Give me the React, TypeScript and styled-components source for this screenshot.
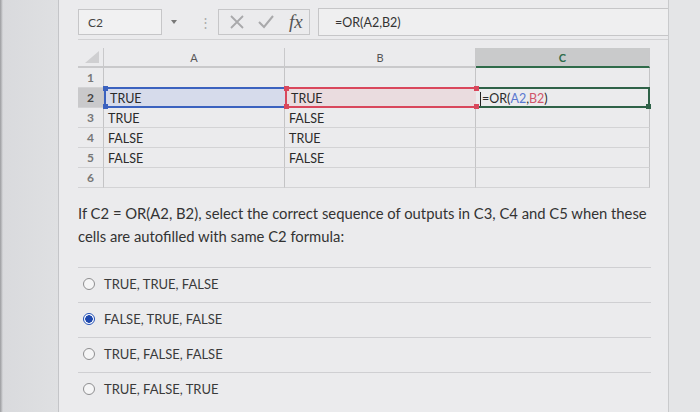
import React from 'react'
import styled, { createGlobalStyle } from 'styled-components'

const GlobalStyle = createGlobalStyle`
  html, body { margin: 0; padding: 0; }
  body {
    width: 700px;
    height: 412px;
    overflow: hidden;
    background: #e6e7e9;
    font-family: Lato, "Open Sans", sans-serif;
  }
`

const rows = [
  { n: '1', a: '', b: '' },
  { n: '2', a: 'TRUE', b: 'TRUE' },
  { n: '3', a: 'TRUE', b: 'FALSE' },
  { n: '4', a: 'FALSE', b: 'TRUE' },
  { n: '5', a: 'FALSE', b: 'FALSE' },
  { n: '6', a: '', b: '' },
]

const options = ['TRUE, TRUE, FALSE', 'FALSE, TRUE, FALSE', 'TRUE, FALSE, FALSE', 'TRUE, FALSE, TRUE']

export default function App(): React.ReactElement {
  return (
    <>
      <GlobalStyle />
      <Page>
        <LeftStrip />
        <Panel>
          <FormulaBar>
            <NameBox>
              <span>C2</span>
              <Caret />
            </NameBox>
            <Grip>⋮</Grip>
            <IconBox>
              <svg width="20" height="20" viewBox="0 0 20 20">
                <path d="M4 4 L16 16 M16 4 L4 16" stroke="#a9a9ab" strokeWidth="1.8" fill="none" />
              </svg>
              <svg width="20" height="20" viewBox="0 0 20 20">
                <path d="M3 10 L8 15 L17 4" stroke="#a9a9ab" strokeWidth="2" fill="none" />
              </svg>
              <Fx>fx</Fx>
            </IconBox>
            <FormulaInput>=OR(A2,B2)</FormulaInput>
          </FormulaBar>

          <Sheet>
            <Corner>
              <svg width="14" height="12" viewBox="0 0 14 12">
                <path d="M14 0 L14 12 L0 12 Z" fill="#cfcfd1" />
              </svg>
            </Corner>
            <ColHead>A</ColHead>
            <ColHead>B</ColHead>
            <ColHead $active>C</ColHead>
            {rows.map((r) => (
              <React.Fragment key={r.n}>
                <RowHead $active={r.n === '2'}>{r.n}</RowHead>
                {r.n === '2' ? (
                  <>
                    <Cell $tone="blue">
                      {r.a}
                      <Handle $c="#3b62bf" $x="left" $y="top" />
                      <Handle $c="#3b62bf" $x="left" $y="bottom" />
                    </Cell>
                    <Cell $tone="red">
                      {r.b}
                      <Handle $c="#d9475c" $x="left" $y="top" />
                      <Handle $c="#d9475c" $x="left" $y="bottom" />
                      <Handle $c="#d9475c" $x="right" $y="top" />
                      <Handle $c="#d9475c" $x="right" $y="bottom" />
                    </Cell>
                    <Cell $tone="green">
                      <Cursor />=OR(<Ref $c="#5a78d0">A2</Ref>,<Ref $c="#d0546a">B2</Ref>)
                      <Handle $c="#2f6248" $x="right" $y="bottom" />
                    </Cell>
                  </>
                ) : (
                  <>
                    <Cell>{r.a}</Cell>
                    <Cell>{r.b}</Cell>
                    <Cell />
                  </>
                )}
              </React.Fragment>
            ))}
          </Sheet>

          <Question>
            If C2 = OR(A2, B2), select the correct sequence of outputs in C3, C4 and C5 when these
            cells are autofilled with same C2 formula:
          </Question>

          <Options>
            {options.map((o, i) => (
              <Option key={o}>
                <Radio $checked={i === 1} />
                {o}
              </Option>
            ))}
          </Options>
        </Panel>
        <RightStrip />
      </Page>
    </>
  )
}

const Page = styled.div`
  display: flex;
  width: 700px;
  height: 412px;
`

const LeftStrip = styled.div`
  width: 58px;
  background: linear-gradient(90deg, #9a9b9e 0, #d9dadd 3px, #dfe0e2 100%);
  border-right: 1px solid #c4c5c8;
`

const RightStrip = styled.div`
  width: 31px;
  background: #e4e5e7;
  border-left: 1px solid #c9cacc;
`

const Panel = styled.div`
  flex: 1;
  background: #ebebed;
  padding: 8px 0 0 19px;
  display: flex;
  flex-direction: column;
`

const FormulaBar = styled.div`
  display: flex;
  align-items: center;
  height: 28px;
  border-bottom: 1px solid #d2d2d4;
  padding-bottom: 3px;
`

const NameBox = styled.div`
  width: 84px;
  height: 26px;
  box-sizing: border-box;
  border: 1px solid #c6c6c8;
  background: #f1f1f2;
  display: flex;
  align-items: center;
  padding-left: 9px;
  font-size: 12px;
  color: #444;
  position: relative;
`

const Caret = styled.span`
  position: absolute;
  left: 92px;
  top: 10px;
  width: 0;
  height: 0;
  border-left: 3px solid transparent;
  border-right: 3px solid transparent;
  border-top: 4px solid #777;
`

const Grip = styled.span`
  margin-left: 37px;
  width: 19px;
  color: #aaa;
  font-size: 13px;
`

const IconBox = styled.div`
  width: 92px;
  height: 26px;
  box-sizing: border-box;
  border: 1px solid #c6c6c8;
  display: flex;
  align-items: center;
  gap: 9px;
  padding-left: 8px;
`

const Fx = styled.span`
  font-family: 'Liberation Serif', serif;
  font-style: italic;
  font-size: 19px;
  color: #555;
  margin-left: 4px;
`

const FormulaInput = styled.div`
  flex: 1;
  height: 28px;
  margin-left: 8px;
  box-sizing: border-box;
  border: 1px solid #c6c6c8;
  border-right: none;
  display: flex;
  align-items: center;
  padding-left: 16px;
  font-size: 12.5px;
  color: #333;
  background: #efeff0;
`

const Sheet = styled.div`
  display: grid;
  grid-template-columns: 26px 181px 191px 174px;
  grid-auto-rows: 20px;
  margin-top: 8px;
  font-family: Lato, 'Open Sans', sans-serif;
  font-size: 12.5px;
  color: #2a2a2a;
`

const Corner = styled.div`
  display: flex;
  align-items: flex-start;
  justify-content: flex-end;
  padding: 3px 4px 0 0;
  border-bottom: 2px solid #c9c9cb;
  border-right: 1px solid #c9c9cb;
`

const ColHead = styled.div<{ $active?: boolean }>`
  display: flex;
  align-items: center;
  justify-content: center;
  font-size: 11px;
  color: ${({ $active }) => ($active ? '#2f6b4a' : '#555')};
  font-weight: ${({ $active }) => ($active ? 700 : 400)};
  background: ${({ $active }) => ($active ? '#c9cacb' : 'transparent')};
  border-bottom: 2px solid ${({ $active }) => ($active ? '#2f6b4a' : '#c9c9cb')};
  border-right: 1px solid #c9c9cb;
`

const RowHead = styled.div<{ $active?: boolean }>`
  display: flex;
  align-items: center;
  justify-content: center;
  font-size: 12px;
  font-weight: 700;
  color: ${({ $active }) => ($active ? '#444' : '#777')};
  background: ${({ $active }) => ($active ? '#c9c9cb' : 'transparent')};
  border-bottom: 1px solid #d3d3d5;
  border-right: 1px solid #c4c4c6;
`

const tones = {
  blue: { line: '#3b62bf', fill: 'rgba(120, 150, 225, 0.18)' },
  red: { line: '#d9475c', fill: 'rgba(230, 140, 150, 0.16)' },
  green: { line: '#2f6248', fill: 'transparent' },
}

const Cell = styled.div<{ $tone?: keyof typeof tones }>`
  position: relative;
  display: flex;
  align-items: center;
  padding: 2px 0 0 4px;
  box-sizing: border-box;
  border-bottom: 1px solid #d3d3d5;
  border-right: 1px solid #c4c4c6;
  ${({ $tone }) =>
    $tone &&
    `
    background: ${tones[$tone].fill};
    border-top: 2px solid ${tones[$tone].line};
    border-bottom: 2px solid ${tones[$tone].line};
    margin-top: -1px;
  `}
  ${({ $tone }) => $tone === 'green' && `border-right: 2px solid ${tones.green.line};`}
  ${({ $tone }) => $tone === 'red' && `border-left: 2px solid ${tones.red.line}; border-right: none;`}
  ${({ $tone }) => $tone === 'blue' && `border-left: 2px solid ${tones.blue.line}; border-right: none;`}
`

const Handle = styled.span<{ $c: string; $x: 'left' | 'right'; $y: 'top' | 'bottom' }>`
  position: absolute;
  width: 5px;
  height: 5px;
  background: ${({ $c }) => $c};
  ${({ $x }) => $x}: -3px;
  ${({ $y }) => $y}: -3px;
  z-index: 1;
`

const Cursor = styled.span`
  display: inline-block;
  width: 1px;
  height: 14px;
  background: #222;
  margin-right: 1px;
`

const Ref = styled.span<{ $c: string }>`
  color: ${({ $c }) => $c};
`

const Question = styled.p`
  margin: 14px 0 0;
  width: 585px;
  font-size: 14.8px;
  line-height: 23px;
  color: #333;
`

const Options = styled.div`
  margin-top: 19px;
  width: 573px;
  display: flex;
  flex-direction: column;
`

const Option = styled.label`
  height: 35px;
  box-sizing: border-box;
  border-top: 1px solid #cfcfd2;
  display: flex;
  align-items: center;
  padding: 0 0 2px 5px;
  font-size: 13px;
  color: #3a3a3a;
  gap: 9px;
`

const Radio = styled.span<{ $checked?: boolean }>`
  width: 12px;
  height: 12px;
  box-sizing: border-box;
  border-radius: 50%;
  border: 1px solid ${({ $checked }) => ($checked ? '#2452b8' : '#8e8e90')};
  background: ${({ $checked }) => ($checked ? 'radial-gradient(circle, #1d47ad 0 3.5px, #fff 4px)' : '#f5f5f6')};
`
